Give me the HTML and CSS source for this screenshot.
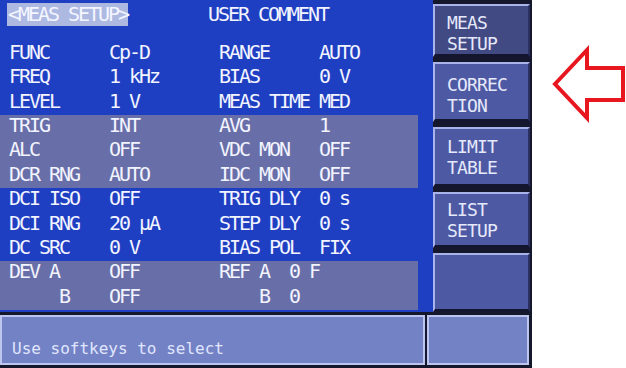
FILE: index.html
```html
<!DOCTYPE html>
<html>
<head>
<meta charset="utf-8">
<link rel="stylesheet" href="styles.css">
</head>
<body>
<div class="page">
  <div class="screen">
    <div class="upper">
      <div class="main">
        <div class="header">
          <span class="tab">&lt;MEAS SETUP&gt;</span>
          <span class="title">USER COMMENT</span>
        </div>
        <div class="rows">
          <div class="row"><span class="c1">FUNC</span><span class="c2">Cp-D</span><span class="c3">RANGE</span><span class="c4">AUTO</span></div>
          <div class="row"><span class="c1">FREQ</span><span class="c2">1 kHz</span><span class="c3">BIAS</span><span class="c4">0 V</span></div>
          <div class="row"><span class="c1">LEVEL</span><span class="c2">1 V</span><span class="c3">MEAS TIME</span><span class="c4">MED</span></div>
          <div class="band">
            <div class="row"><span class="c1">TRIG</span><span class="c2">INT</span><span class="c3">AVG</span><span class="c4">1</span></div>
            <div class="row"><span class="c1">ALC</span><span class="c2">OFF</span><span class="c3">VDC MON</span><span class="c4">OFF</span></div>
            <div class="row"><span class="c1">DCR RNG</span><span class="c2">AUTO</span><span class="c3">IDC MON</span><span class="c4">OFF</span></div>
          </div>
          <div class="row"><span class="c1">DCI ISO</span><span class="c2">OFF</span><span class="c3">TRIG DLY</span><span class="c4">0 s</span></div>
          <div class="row"><span class="c1">DCI RNG</span><span class="c2">20 μA</span><span class="c3">STEP DLY</span><span class="c4">0 s</span></div>
          <div class="row"><span class="c1">DC SRC</span><span class="c2">0 V</span><span class="c3">BIAS POL</span><span class="c4">FIX</span></div>
          <div class="band">
            <div class="row"><span class="c1">DEV A</span><span class="c2">OFF</span><span class="c3">REF A  0 F</span><span class="c4"></span></div>
            <div class="row"><span class="c1">     B</span><span class="c2">OFF</span><span class="c3">    B  0</span><span class="c4"></span></div>
          </div>
        </div>
      </div>
      <div class="softkeys">
        <div class="key key-1 key-active">MEAS<br>SETUP</div>
        <div class="key key-2">CORREC<br>TION</div>
        <div class="key key-3">LIMIT<br>TABLE</div>
        <div class="key key-4">LIST<br>SETUP</div>
        <div class="key key-5"></div>
      </div>
    </div>
    <div class="lower">
      <div class="status">Use softkeys to select</div>
      <div class="status-key"></div>
    </div>
  </div>
  <svg class="arrow" width="94" height="368" viewBox="532 0 94 368">
    <polygon points="555,84 587,50 587,68 623,68 623,100 587,100 587,118" fill="none" stroke="#e8161e" stroke-width="4" stroke-linejoin="miter"/>
  </svg>
</div>
</body>
</html>
```

FILE: styles.css
```css
html, body {
  margin: 0;
  padding: 0;
  background: #ffffff;
}

.page {
  display: flex;
  width: 626px;
  height: 368px;
  overflow: hidden;
}

.screen {
  width: 532px;
  height: 368px;
  background: #15172c;
  display: flex;
  flex-direction: column;
  font-family: "DejaVu Sans Mono", "Liberation Mono", monospace;
  color: #f2f4ff;
}

.upper {
  display: flex;
  height: 312px;
}

.main {
  width: 433px;
  height: 312px;
  background: #1f3fc2;
  padding-top: 3px;
  box-sizing: border-box;
}

.header {
  display: flex;
  align-items: center;
  height: 23px;
  font-size: 20px;
  letter-spacing: -2.04px;
  line-height: 23px;
}

.tab {
  margin-left: 7px;
  width: 121px;
  padding-left: 1px;
  box-sizing: border-box;
  background: #aeb9e2;
  color: #f4f6ff;
  white-space: pre;
}

.title {
  margin-left: 80px;
  white-space: pre;
}

.rows {
  margin-top: 15.8px;
  width: 418px;
}

.band {
  background: #686fa8;
}

.row {
  display: flex;
  height: 24.4px;
  padding-left: 9px;
  font-size: 20px;
  line-height: 21px;
  letter-spacing: -2.04px;
  white-space: pre;
}

.c1 { width: 100px; }
.c2 { width: 110px; }
.c3 { width: 100px; }
.c4 { flex: 1; }

.softkeys {
  width: 97px;
  padding-top: 4px;
  display: flex;
  flex-direction: column;
  gap: 5px;
}

.key {
  box-sizing: border-box;
  background: #4d5aa3;
  border-top: 2px solid #a9b4ea;
  border-left: 2px solid #a9b4ea;
  border-right: 2px solid #2c3060;
  border-bottom: 3px solid #141630;
  padding: 7px 0 0 12px;
  font-size: 18px;
  line-height: 21px;
  letter-spacing: -0.84px;
  color: #e6e9fb;
}

.key-active { background: #424a84; }

.key-1 { height: 53px; padding-top: 6px; }
.key-2 { height: 60px; padding-top: 10px; }
.key-3 { height: 60px; padding-top: 7px; }
.key-4 { height: 56px; padding-top: 5px; }
.key-5 { height: 59px; }

.lower {
  display: flex;
  margin-top: 3px;
  height: 50px;
  gap: 2px;
}

.status {
  width: 425px;
  box-sizing: border-box;
  background: #7282c4;
  border: 2px solid #bcc6ee;
  display: flex;
  align-items: flex-end;
  padding: 0 0 4px 10px;
  font-size: 16px;
  line-height: 20px;
  color: #e0e6ff;
  white-space: pre;
}

.status-key {
  width: 102px;
  box-sizing: border-box;
  background: #7282c4;
  border: 2px solid #bcc6ee;
}

.arrow {
  flex: none;
  display: block;
}
```
